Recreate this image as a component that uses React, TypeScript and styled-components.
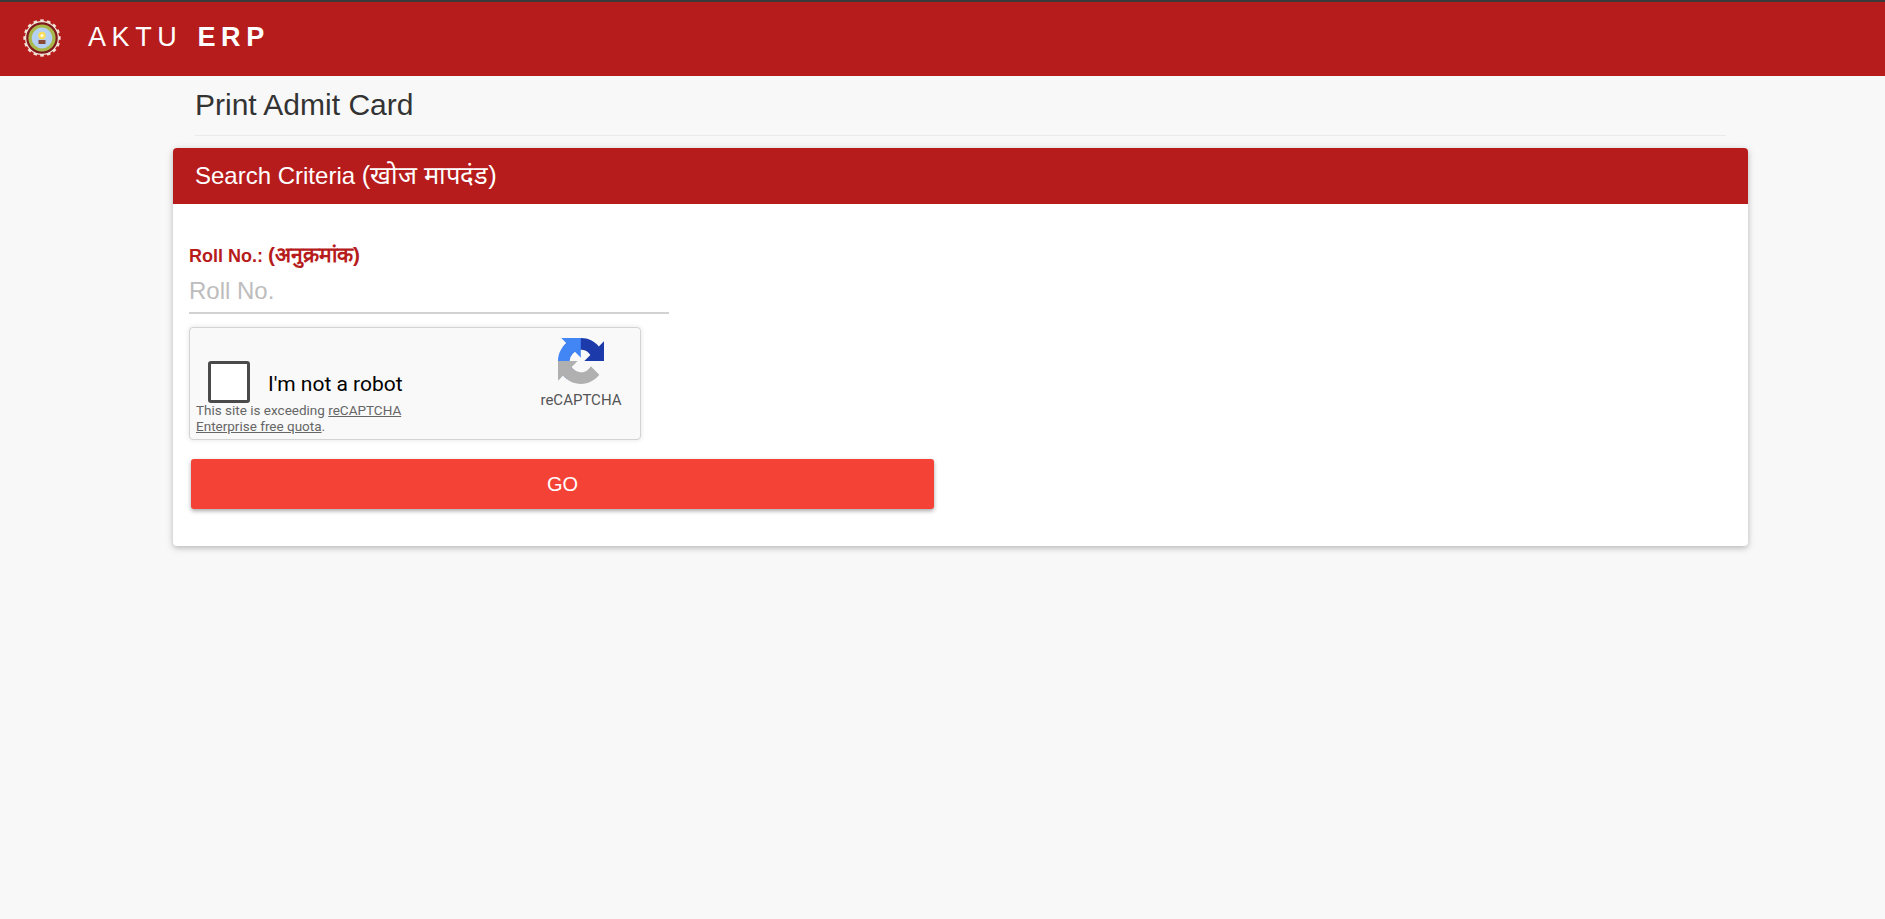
import styled, { createGlobalStyle } from "styled-components";

const GlobalStyle = createGlobalStyle`
  html, body {
    margin: 0;
    padding: 0;
    background: #f8f8f8;
    font-family: "Liberation Sans", Arial, sans-serif;
  }
  * {
    box-sizing: border-box;
  }
`;

const Navbar = styled.header`
  height: 76px;
  background: #b71c1c;
  border-top: 2px solid #3a3a3a;
  display: flex;
  align-items: center;
  padding: 0 0 3px 23px;
`;

const Brand = styled.div`
  margin-left: 27px;
  color: #fff;
  font-size: 27px;
  letter-spacing: 5.6px;
  white-space: pre;
  b {
    font-weight: 700;
    margin-left: 2px;
  }
`;

const Container = styled.main`
  width: 1575px;
  margin-left: 173px;
  padding-bottom: 30px;
`;

const PageHeader = styled.div`
  margin: 0 22px;
  height: 60px;
  padding-top: 11px;
  border-bottom: 1px solid #eaeaea;
  h1 {
    margin: 0;
    font-size: 30px;
    line-height: 36px;
    font-weight: 400;
    color: #333;
  }
`;

const Card = styled.section`
  margin-top: 12px;
  background: #fff;
  border-radius: 4px;
  height: 398px;
  box-shadow: 0 2px 5px rgba(0, 0, 0, 0.16), 0 2px 10px rgba(0, 0, 0, 0.12);
  overflow: hidden;
`;

const CardHeader = styled.div`
  height: 56px;
  background: #b71c1c;
  color: #fff;
  font-size: 24px;
  line-height: 56px;
  padding-left: 22px;
`;

const Hindi = styled.span<{ $size: number }>`
  font-size: ${(p) => p.$size}px;
  line-height: 1;
`;

const CardBody = styled.div`
  padding: 40px 16px 0;
  display: flex;
  flex-direction: column;
  align-items: flex-start;
`;

const Label = styled.label`
  font-size: 18px;
  line-height: 20px;
  font-weight: 700;
  color: #b71c1c;
`;

const TextInput = styled.input`
  display: block;
  width: 480px;
  height: 48px;
  padding: 4px 0 0;
  border: none;
  border-bottom: 2px solid #d2d2d2;
  background: transparent;
  font-family: inherit;
  font-size: 24px;
  outline: none;
  &::placeholder {
    color: #bdbdbd;
    opacity: 1;
  }
`;

const Captcha = styled.div`
  margin-top: 13px;
  width: 452px;
  height: 113px;
  background: #f9f9f9;
  border: 1px solid #d3d3d3;
  border-radius: 4px;
  box-shadow: 0 0 4px 1px rgba(0, 0, 0, 0.08);
  display: flex;
  justify-content: space-between;
  font-family: Roboto, sans-serif;
`;

const CaptchaLeft = styled.div`
  padding: 33px 0 0 6px;
`;

const CheckRow = styled.div`
  display: flex;
  align-items: center;
  gap: 18px;
  padding-left: 12px;
  font-size: 21px;
  color: #000;
`;

const CheckText = styled.span`
  line-height: 22px;
  margin-top: 3px;
`;

const CheckBox = styled.div`
  width: 42px;
  height: 42px;
  background: #fff;
  border: 3px solid #4a4a4a;
  border-radius: 3px;
`;

const Quota = styled.div`
  margin-top: -1px;
  width: 225px;
  font-size: 13.5px;
  line-height: 16px;
  color: #666;
  u {
    text-decoration: underline;
  }
`;

const CaptchaBrand = styled.div`
  width: 118px;
  padding-top: 10px;
  display: flex;
  flex-direction: column;
  align-items: center;
  gap: 7px;
  color: #555;
  font-size: 15px;
`;

const GoButton = styled.button`
  margin: 19px 0 0 2px;
  width: 743px;
  height: 50px;
  border: none;
  border-radius: 3px;
  background: #f44336;
  color: #fff;
  font-family: "Liberation Sans", Arial, sans-serif;
  font-size: 20px;
  box-shadow: 0 2px 4px rgba(0, 0, 0, 0.35);
`;

function Emblem() {
  const teeth = Array.from({ length: 16 }, (_, i) => (i * 360) / 16);
  return (
    <svg width="38" height="38" viewBox="0 0 38 38">
      {teeth.map((a) => (
        <rect key={a} x="17.2" y="0.4" width="3.6" height="4" fill="#f3e4d8" transform={`rotate(${a} 19 19)`} />
      ))}
      <circle cx="19" cy="19" r="16.4" fill="#7e1a1c" stroke="#f3e4d8" strokeWidth="1.2" />
      <circle cx="19" cy="19" r="13.6" fill="#a9b84a" />
      <circle cx="19" cy="19" r="10.4" fill="#b4d0f2" />
      <circle cx="19" cy="16.5" r="3.8" fill="#f8dc5c" />
      <circle cx="19" cy="16.5" r="1.6" fill="#fffbe0" />
      <rect x="15.5" y="21" width="7" height="4" fill="#8a4a3a" />
    </svg>
  );
}

function RecaptchaLogo() {
  return (
    <svg width="46" height="46" viewBox="0 0 64 64">
      <path d="M64 31.955l-.033-1.37V4.687l-7.16 7.16C50.948 4.674 42.033.093 32.05.093c-10.4 0-19.622 4.96-25.458 12.64l11.736 11.86a15.55 15.55 0 0 1 4.754-5.334c2.05-1.6 4.952-2.906 8.968-2.906.485 0 .86.057 1.135.163 4.976.393 9.288 3.14 11.828 7.124l-8.307 8.307c10.522-.04 22.4-.066 27.295.005" fill="#1c3aa9" />
      <path d="M31.862.094l-1.37.033H4.594l7.16 7.16C4.58 13.147 0 22.06 0 32.046c0 10.4 4.96 19.622 12.64 25.458L24.5 45.768a15.55 15.55 0 0 1-5.334-4.754c-1.6-2.05-2.906-4.952-2.906-8.968 0-.485.057-.86.163-1.135.393-4.976 3.14-9.288 7.124-11.828l8.307 8.307c-.04-10.522-.066-22.4.005-27.295" fill="#4285f4" />
      <path d="M.001 32.045l.033 1.37v25.898l7.16-7.16c5.86 7.173 14.774 11.754 24.76 11.754 10.4 0 19.622-4.96 25.458-12.64l-11.736-11.86a15.55 15.55 0 0 1-4.754 5.334c-2.05 1.6-4.952 2.906-8.968 2.906-.485 0-.86-.057-1.135-.163-4.976-.393-9.288-3.14-11.828-7.124l8.307-8.307c-10.522.04-22.4.066-27.295-.005" fill="#b0b0b0" />
    </svg>
  );
}

export default function App() {
  return (
    <>
      <GlobalStyle />
      <Navbar>
        <Emblem />
        <Brand>
          AKTU <b>ERP</b>
        </Brand>
      </Navbar>
      <Container>
        <PageHeader>
          <h1>Print Admit Card</h1>
        </PageHeader>
        <Card>
          <CardHeader>
            Search Criteria <Hindi $size={25.5}>(खोज मापदंड)</Hindi>
          </CardHeader>
          <CardBody>
            <Label>
              Roll No.: <Hindi $size={21}>(अनुक्रमांक)</Hindi>
            </Label>
            <TextInput placeholder="Roll No." />
            <Captcha>
              <CaptchaLeft>
                <CheckRow>
                  <CheckBox />
                  <CheckText>I'm not a robot</CheckText>
                </CheckRow>
                <Quota>
                  This site is exceeding <u>reCAPTCHA Enterprise free quota</u>.
                </Quota>
              </CaptchaLeft>
              <CaptchaBrand>
                <RecaptchaLogo />
                reCAPTCHA
              </CaptchaBrand>
            </Captcha>
            <GoButton>GO</GoButton>
          </CardBody>
        </Card>
      </Container>
    </>
  );
}
